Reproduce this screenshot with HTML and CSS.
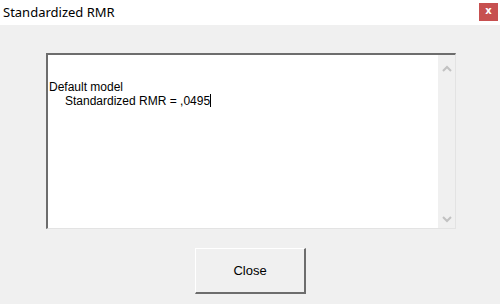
FILE: index.html
```html
<!DOCTYPE html>
<html>
<head>
<meta charset="utf-8">
<link rel="stylesheet" href="styles.css">
</head>
<body>
<div class="window">
  <div class="titlebar">
    <span class="title">Standardized RMR</span>
    <span class="close-x">x</span>
  </div>
  <div class="content">
    <div class="textbox">
      <div class="text-area">
        <div class="line first">Default model</div>
        <div class="line indent">Standardized RMR = ,0495<span class="caret"></span></div>
      </div>
      <div class="scrollbar">
        <svg width="10" height="7" viewBox="0 0 10 7"><path d="M1 6 L5 2 L9 6" fill="none" stroke="#c2c2c2" stroke-width="2"/></svg>
        <svg width="10" height="7" viewBox="0 0 10 7"><path d="M1 1 L5 5 L9 1" fill="none" stroke="#c2c2c2" stroke-width="2"/></svg>
      </div>
    </div>
    <div class="btn-row">
      <div class="button">Close</div>
    </div>
  </div>
</div>
</body>
</html>
```
FILE: styles.css
```css
html, body {
  margin: 0;
  padding: 0;
}
body {
  width: 500px;
  height: 304px;
  overflow: hidden;
  background: #f0f0f0;
  font-family: "Liberation Sans", Arial, sans-serif;
}
.window {
  display: flex;
  flex-direction: column;
  height: 304px;
}
.titlebar {
  height: 25px;
  background: #ffffff;
  display: flex;
  align-items: center;
  justify-content: space-between;
  padding: 0 2px 0 3px;
  border-top: 1px solid #ffffff;
  box-sizing: border-box;
}
.title {
  font-family: "Noto Sans", sans-serif;
  font-size: 13px;
  color: #000;
  margin-top: -3px;
}
.close-x {
  width: 19px;
  height: 18px;
  background: #c75050;
  color: #fff;
  font-family: "DejaVu Sans", sans-serif;
  font-weight: bold;
  font-size: 10px;
  line-height: 16px;
  text-align: center;
  margin-top: -2px;
}
.content {
  flex: 1;
  display: flex;
  flex-direction: column;
  padding: 28px 0 0 46px;
}
.textbox {
  width: 410px;
  height: 176px;
  box-sizing: border-box;
  border-top: 2px solid #6d6d6d;
  border-left: 2px solid #6d6d6d;
  border-right: 1px solid #e3e3e3;
  border-bottom: 1px solid #e3e3e3;
  background: #fff;
  display: flex;
}
.text-area {
  flex: 1;
  padding: 25px 0 0 1px;
  font-size: 12px;
  line-height: 14px;
  color: #000;
}
.line.indent {
  padding-left: 16px;
}
.caret {
  display: inline-block;
  width: 1px;
  height: 13px;
  background: #000;
  vertical-align: -2px;
}
.scrollbar {
  width: 17px;
  background: #f0f0f0;
  display: flex;
  flex-direction: column;
  justify-content: space-between;
  align-items: center;
  padding: 10px 0 5px;
  box-sizing: border-box;
}
.btn-row {
  display: flex;
  padding: 19px 0 0 149px;
}
.button {
  width: 111px;
  height: 46px;
  box-sizing: border-box;
  border-top: 1px solid #ffffff;
  border-left: 1px solid #ffffff;
  border-right: 2px solid #6d6d6d;
  border-bottom: 2px solid #6d6d6d;
  background: #f0f0f0;
  display: flex;
  align-items: center;
  justify-content: center;
  font-size: 13px;
  color: #000;
}
```
